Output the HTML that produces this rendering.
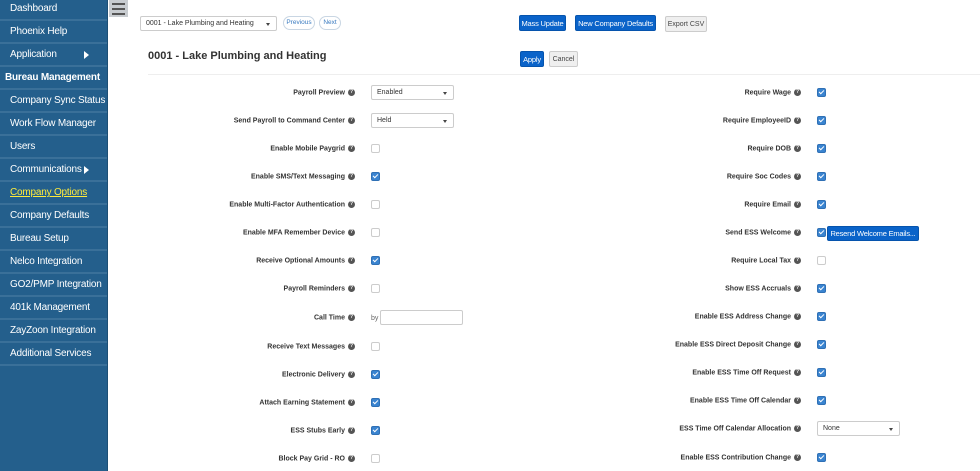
<!DOCTYPE html>
<html><head><style>
*{margin:0;padding:0;box-sizing:border-box}
body{width:980px;height:471px;overflow:hidden;background:#fff;font-family:"Liberation Sans",sans-serif;position:relative}
#sb{position:absolute;left:0;top:0;width:108px;height:471px;background:#245f8c;border-right:1px solid #1d4f75}
#sb div{height:23px;line-height:21px;color:#fff;font-size:10px;padding-left:10px;border-bottom:2px solid #3a7099;position:relative;white-space:nowrap;letter-spacing:-0.2px}
#sb .h{font-weight:bold;padding-left:5px}
#sb .y{color:#ffeb3b;text-decoration:underline}
#sb .a:after{content:"";position:absolute;left:84px;top:7px;border-left:5px solid #fff;border-top:4px solid transparent;border-bottom:4px solid transparent}
.ham{position:absolute;left:109px;top:0;width:19px;height:17px;background:#c8ccd0}
.ham i{position:absolute;left:3px;width:13px;height:2px;background:#555}
.ab{position:absolute}
.sel{position:absolute;height:15px;border:1px solid #ccc;border-radius:2px;font-size:7px;color:#333;padding:3px 5px;background:#fff}
.sel:after{content:"";position:absolute;right:6px;top:6px;border-top:3px solid #444;border-left:2.5px solid transparent;border-right:2.5px solid transparent}
.pill{position:absolute;height:14px;border:1px solid #c9d6e3;border-radius:7px;font-size:6.5px;color:#3a7bc0;line-height:12px;text-align:center}
.bb{position:absolute;height:16px;background:#0a63c9;color:#fff;font-size:7.5px;border-radius:2px;line-height:15px;border:1px solid #0654ad;text-align:center;white-space:nowrap;letter-spacing:-0.2px}
.gb{position:absolute;height:16px;background:#efefef;color:#444;font-size:7px;border-radius:2px;line-height:15px;border:1px solid #ccc;text-align:center}
.lab{position:absolute;font-size:7px;font-weight:bold;color:#333;text-align:right;white-space:nowrap}
.q{display:inline-block;width:7px;height:7px;border-radius:50%;background:#555;color:#fff;font-size:5px;line-height:7px;text-align:center;margin-left:3px;vertical-align:middle}
.cb{position:absolute;width:9px;height:9px;border:1px solid #ccc;border-radius:2px;background:#fff}
.ck{background:#3a84d0;border-color:#2f70b5}
.ck:after{content:"";position:absolute;left:2px;top:0px;width:2px;height:4px;border:solid #fff;border-width:0 1.3px 1.3px 0;transform:rotate(45deg)}
</style></head><body>
<div id="sb">
<div style="margin-top:-2px">Dashboard</div><div>Phoenix Help</div><div class="a">Application</div><div class="h">Bureau Management</div><div>Company Sync Status</div><div>Work Flow Manager</div><div>Users</div><div class="a">Communications</div><div class="y">Company Options</div><div>Company Defaults</div><div>Bureau Setup</div><div>Nelco Integration</div><div>GO2/PMP Integration</div><div>401k Management</div><div>ZayZoon Integration</div><div>Additional Services</div>
</div>
<div class="ham"><i style="top:3px"></i><i style="top:8px"></i><i style="top:13px"></i></div>
<div class="sel" style="left:140px;top:16px;width:137px">0001 - Lake Plumbing and Heating</div>
<div class="pill" style="left:283px;top:16px;width:32px">Previous</div>
<div class="pill" style="left:319px;top:16px;width:22px">Next</div>
<div class="bb" style="left:519px;top:15px;width:47px">Mass Update</div>
<div class="bb" style="left:575px;top:15px;width:81px">New Company Defaults</div>
<div class="gb" style="left:665px;top:16px;width:42px">Export CSV</div>
<div class="ab" style="left:148px;top:50px;font-size:11px;font-weight:bold;color:#333">0001 - Lake Plumbing and Heating</div>
<div class="bb" style="left:520px;top:51px;width:24px">Apply</div>
<div class="gb" style="left:549px;top:51px;width:29px">Cancel</div>
<div class="ab" style="left:148px;top:74px;width:832px;height:1px;background:#eee"></div>
<div id="rows"></div>
<script>
var L=[["Payroll Preview","s","Enabled"],["Send Payroll to Command Center","s","Held"],["Enable Mobile Paygrid",0],["Enable SMS/Text Messaging",1],["Enable Multi-Factor Authentication",0],["Enable MFA Remember Device",0],["Receive Optional Amounts",1],["Payroll Reminders",0],["Call Time","t"],["Receive Text Messages",0],["Electronic Delivery",1],["Attach Earning Statement",1],["ESS Stubs Early",1],["Block Pay Grid - RO",0]];
var LY=[93,121,149,177,205,233,261,289,318,347,375,403,431,459];
var R=[["Require Wage",1],["Require EmployeeID",1],["Require DOB",1],["Require Soc Codes",1],["Require Email",1],["Send ESS Welcome",1],["Require Local Tax",0],["Show ESS Accruals",1],["Enable ESS Address Change",1],["Enable ESS Direct Deposit Change",1],["Enable ESS Time Off Request",1],["Enable ESS Time Off Calendar",1],["ESS Time Off Calendar Allocation","s","None"],["Enable ESS Contribution Change",1]];
var RY=[93,121,149,177,205,233,261,289,317,345,373,401,429,458];
var h="";
function row(it,y,rx,cx){
 h+='<div class="lab" style="right:'+(980-rx)+'px;top:'+(y-4)+'px">'+it[0]+'<span class="q">?</span></div>';
 if(it[1]==="s")h+='<div class="sel" style="left:'+cx+'px;top:'+(y-8)+'px;width:83px">'+it[2]+'</div>';
 else if(it[1]==="t")h+='<div class="ab" style="left:'+cx+'px;top:'+(y-3)+'px;font-size:7px;color:#666">by</div><div class="ab" style="left:'+(cx+9)+'px;top:'+(y-8)+'px;width:83px;height:15px;border:1px solid #ccc;border-radius:2px"></div>';
 else h+='<div class="cb'+(it[1]?' ck':'')+'" style="left:'+cx+'px;top:'+(y-5)+'px"></div>';
}
L.forEach(function(it,i){row(it,LY[i],355,371)});
R.forEach(function(it,i){row(it,RY[i],801,817)});
h+='<div class="bb" style="left:827px;top:226px;width:92px;height:15px;line-height:13px">Resend Welcome Emails...</div>';
document.getElementById("rows").innerHTML=h;
</script>
</body></html>
